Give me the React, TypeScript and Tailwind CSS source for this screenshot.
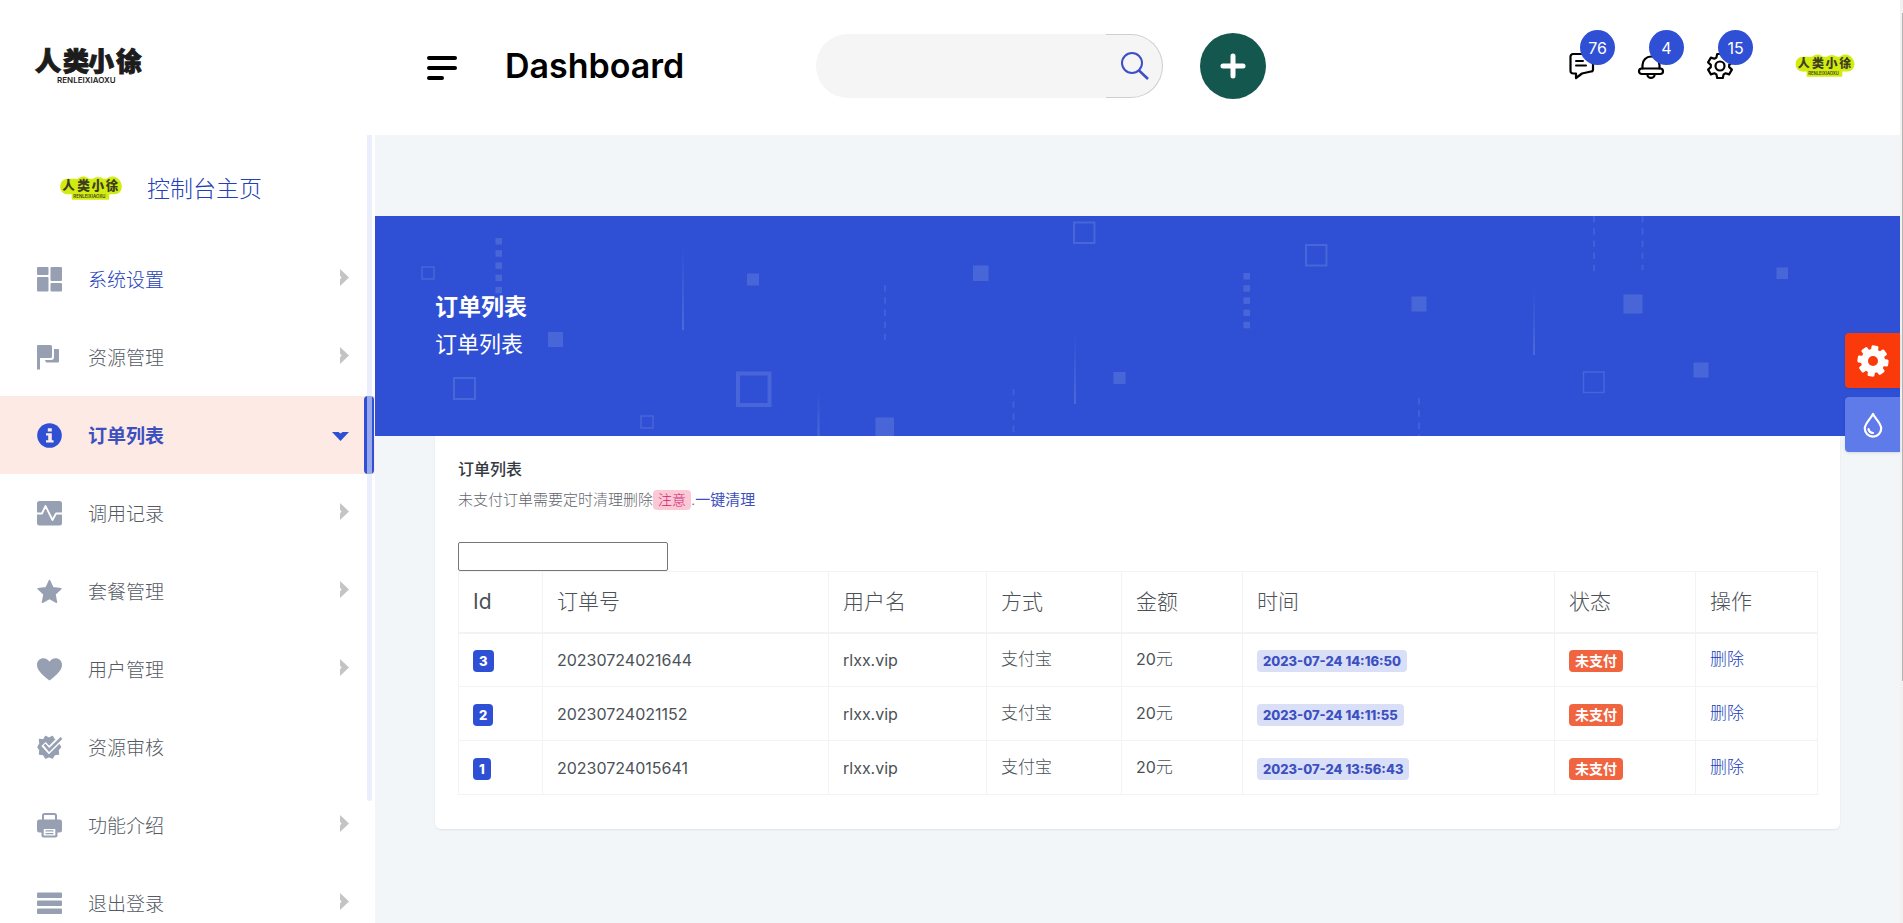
import type { ReactNode } from 'react';

const orders = [
  { id: 3, no: '20230724021644', user: 'rlxx.vip', time: '2023-07-24 14:16:50' },
  { id: 2, no: '20230724021152', user: 'rlxx.vip', time: '2023-07-24 14:11:55' },
  { id: 1, no: '20230724015641', user: 'rlxx.vip', time: '2023-07-24 13:56:43' },
];

const columns = [
  { label: 'Id', width: 'w-[84px]' },
  { label: '订单号', width: 'w-[286px]' },
  { label: '用户名', width: 'w-[158px]' },
  { label: '方式', width: 'w-[135px]' },
  { label: '金额', width: 'w-[121px]' },
  { label: '时间', width: 'w-[312px]' },
  { label: '状态', width: 'w-[141px]' },
  { label: '操作', width: 'w-[122px]' },
];

type NavItem = {
  label: string;
  icon: ReactNode;
  active?: boolean;
  highlight?: boolean;
  leaf?: boolean;
};

const navItems: NavItem[] = [
  {
    label: '系统设置',
    highlight: true,
    icon: (
      <>
        <rect x="0" y="0" width="11.5" height="8" rx="1" />
        <rect x="13.5" y="0" width="11.5" height="14" rx="1" />
        <rect x="0" y="10" width="11.5" height="14.5" rx="1" />
        <rect x="13.5" y="16" width="11.5" height="8.5" rx="1" />
      </>
    ),
  },
  {
    label: '资源管理',
    icon: (
      <>
        <path d="M1 0h12.5a1.5 1.5 0 0 1 1.5 1.5v10a1.5 1.5 0 0 1-1.5 1.5H3v11.5H0V1a1 1 0 0 1 1-1z" />
        <path d="M17 4h4a1 1 0 0 1 1 1v11.500a1 1 0 0 1-1 1H9.500q-1-.5-1.500-2.500H14a3 3 0 0 0 3-3z" />
      </>
    ),
  },
  {
    label: '订单列表',
    active: true,
    icon: (
      <>
        <circle cx="12.500" cy="12.500" r="12.300" />
        <path
          d="M10.800 5.300h4v3.200h-4zM9 10.300h5.800v7h1.800v2.200H9v-2.200h2.200v-4.800H9z"
          fill="#fdeae4"
        />
      </>
    ),
  },
  {
    label: '调用记录',
    icon: (
      <>
        <rect x="0" y="0" width="25" height="24.500" rx="2.500" />
        <path
          d="M0 12.500h5L8.500 5l7 14 3.500-6.500H25"
          fill="none"
          stroke="#fff"
          strokeWidth="1.800"
          strokeLinejoin="round"
        />
      </>
    ),
  },
  {
    label: '套餐管理',
    icon: (
      <path
        d="M12.500 1.500l3.400 7.300 8 1-5.900 5.500 1.500 8-7-3.900-7 3.900 1.500-8L1.100 9.800l8-1z"
        stroke="currentColor"
        strokeWidth="1.500"
        strokeLinejoin="round"
      />
    ),
  },
  {
    label: '用户管理',
    icon: (
      <path d="M12.500 23.500C4 17 0 13 0 7.800 0 3.800 3 1.300 6.400 1.300c2.600 0 4.700 1.200 6.100 3.400 1.400-2.200 3.500-3.400 6.100-3.400C22 1.300 25 3.800 25 7.800c0 5.200-4 9.200-12.500 15.700z" />
    ),
  },
  {
    label: '资源审核',
    leaf: true,
    icon: (
      <>
        <path
          d="M8.500 1.500l3.500 2 3.500-2 2 3.500 4-.5-.5 4 2.500 3.500-2.500 3 .5 4-4 .5-2 3.500-3.500-1.500-3.500 1.500-2-3.500-4-.5.500-4L1 12l2-3.500-.5-4 4 .5z"
          stroke="currentColor"
          strokeWidth="1.500"
          strokeLinejoin="round"
        />
        <path d="M6.500 9l5.500 6L25 2" fill="none" stroke="#fff" strokeWidth="6" />
        <path d="M7.500 9.500l4.700 5.500L24.500 3" fill="none" stroke="currentColor" strokeWidth="2.600" />
      </>
    ),
  },
  {
    label: '功能介绍',
    icon: (
      <>
        <path d="M6 7V2.500A1.500 1.500 0 0 1 7.500 1h10A1.500 1.500 0 0 1 19 2.500V7" fill="none" stroke="currentColor" strokeWidth="2" />
        <rect x="0" y="6.500" width="25" height="13" rx="2.500" />
        <path d="M4.500 15h16v7.500a2 2 0 0 1-2 2h-12a2 2 0 0 1-2-2z" />
        <path d="M6.700 16h11.600v6.500H6.700z" fill="#fff" />
        <path d="M8.500 17.800h8M8.500 20.700h8" stroke="currentColor" strokeWidth="1.300" />
      </>
    ),
  },
  {
    label: '退出登录',
    icon: (
      <>
        <rect x="0" y="1.500" width="25" height="5.500" rx="1" />
        <rect x="0" y="9.500" width="25" height="5.500" rx="1" />
        <rect x="0" y="17.500" width="25" height="5.500" rx="1" />
      </>
    ),
  },
];

// Banner artwork, drawn from the banner's top left corner
const filledSquares = [
  [372, 57.5, 12], [173, 116, 15], [500.5, 201.5, 18.5], [598, 49.5, 15.5],
  [1036.5, 80.5, 15], [738.5, 156, 12], [1401.5, 51.5, 11.5], [1248.5, 78.5, 19],
  [1318.5, 146.5, 15],
];
const outlinedSquares = [
  [47, 51, 12, 1.5], [79, 162, 21, 2], [266, 200, 12, 1.5], [363, 157.5, 31.5, 4],
  [699, 6.5, 20.5, 2], [931, 29, 20.5, 2], [1208.5, 156, 20.5, 1.5],
];
const dotColumns = [
  [120.5, 22], [868.5, 57],
];
const dashedLines = [
  [510, 69, 127], [638.5, 173, 217], [1044, 182, 220], [1219, 0, 56], [1267.5, 0, 54],
];
const fadingLines = [
  [308, 31, 114], [443.5, 174, 220], [700, 116, 188], [1159, 72, 139],
];

function BannerArt() {
  return (
    <svg className="absolute inset-0 w-full h-full" aria-hidden="true">
      <defs>
        <linearGradient id="fade" x1="0" y1="0" x2="0" y2="1">
          <stop offset="0" stopColor="#fff" stopOpacity="0" />
          <stop offset="1" stopColor="#fff" stopOpacity="0.14" />
        </linearGradient>
      </defs>
      <g fill="#fff" fillOpacity="0.13">
        {filledSquares.map(([x, y, s]) => (
          <rect key={x} x={x} y={y} width={s} height={s} />
        ))}
        {dotColumns.map(([x, y]) =>
          [0, 1, 2, 3, 4].map((i) => (
            <rect key={`${x}-${i}`} x={x} y={y + i * 12.2} width={6.5} height={6.5} />
          ))
        )}
      </g>
      <g fill="none" stroke="#fff" strokeOpacity="0.12">
        {outlinedSquares.map(([x, y, s, w]) => (
          <rect key={x} x={x} y={y} width={s} height={s} strokeWidth={w} />
        ))}
      </g>
      <g fill="none" stroke="#fff" strokeOpacity="0.09">
        {dashedLines.map(([x, y1, y2]) => (
          <path key={x} d={`M${x} ${y1}V${y2}`} strokeWidth={2} strokeDasharray="6.500 5.700" />
        ))}
      </g>
      {fadingLines.map(([x, y1, y2]) => (
        <rect key={x} x={x - 1} y={y1} width={2} height={y2 - y1} fill="url(#fade)" />
      ))}
    </svg>
  );
}

function Logo({ className }: { className: string }) {
  return (
    <svg viewBox="0 0 110 38" className={`overflow-visible ${className}`} role="img" aria-label="人类小徐">
      <g fill="#1c1c1c">
        <text
          x="0 28 53 81"
          y="24"
          fontSize="26"
          fontWeight="900"
          fontFamily='"Noto Sans CJK SC", sans-serif'
          stroke="#1c1c1c"
          strokeWidth="1"
        >
          人类小徐
        </text>
        <text x="22" y="36" fontSize="8" fontWeight="600" fontFamily="Inter, sans-serif">
          RENLEIXIAOXU
        </text>
      </g>
    </svg>
  );
}

function LogoBadge({ className }: { className: string }) {
  return (
    <svg viewBox="-6 -6 122 49" className={`overflow-visible ${className}`} role="img" aria-label="人类小徐">
      <g fill="#d2ec12" stroke="#d2ec12" strokeLinejoin="round">
        <rect x="4" y="6" width="102" height="18" rx="8" strokeWidth="10" />
        <circle cx="41" cy="11" r="14" />
        <circle cx="68" cy="12" r="14" />
        <circle cx="94" cy="12" r="15" />
        <circle cx="15" cy="15" r="13" />
        <rect x="22" y="28" width="64" height="9" strokeWidth="4" />
      </g>
      <g fill="#3d3f1f">
        <text
          x="3 30 56 82"
          y="22"
          fontSize="23"
          fontWeight="900"
          fontFamily='"Noto Sans CJK SC", sans-serif'
        >
          人类小徐
        </text>
        <text x="23" y="36" fontSize="8" fontWeight="600" fontFamily="Inter, sans-serif">
          RENLEIXIAOXU
        </text>
      </g>
    </svg>
  );
}

function CountButton({ label, count, children }: { label: string; count: number; children: ReactNode }) {
  return (
    <button type="button" aria-label={label} className="relative w-7 h-7">
      <svg
        viewBox="0 0 28 28"
        className="w-7 h-7"
        fill="none"
        stroke="#000"
        strokeWidth="2.200"
        strokeLinejoin="round"
        strokeLinecap="round"
      >
        {children}
      </svg>
      <span className="absolute -top-[22px] left-3 w-[35px] h-[35px] rounded-full bg-[#2f50d4] text-white text-base flex items-center justify-center">
        {count}
      </span>
    </button>
  );
}

function Header() {
  return (
    <header className="flex items-center h-[135px] shrink-0 bg-white pb-[3px]">
      <div className="w-[375px] shrink-0 pl-[35px]">
        <a href="#" className="block w-[110px]">
          <Logo className="w-[110px] h-[38px]" />
        </a>
      </div>
      <div className="flex flex-1 items-center pl-[52px] pr-[43px]">
        <button type="button" aria-label="菜单" className="flex flex-col gap-[6px] w-[30px] pt-1">
          <span className="h-1 w-full rounded-full bg-black" />
          <span className="h-1 w-full rounded-full bg-black" />
          <span className="h-1 w-[17px] rounded-full bg-black" />
        </button>
        <h1 className="ml-12 w-[311px] text-[34px] leading-10 font-semibold text-black">Dashboard</h1>
        <div className="flex w-[347px] h-16">
          <input
            type="text"
            aria-label="搜索"
            className="w-[290px] min-w-0 rounded-l-full bg-[#f5f5f5] px-6 outline-none"
          />
          <button
            type="button"
            aria-label="搜索按钮"
            className="flex-1 flex items-center rounded-r-full border border-l-0 border-[#cfcfcf] bg-[#f5f5f5] pl-[14px]"
          >
            <svg viewBox="0 0 30 30" className="w-[30px] h-[30px]" fill="none" stroke="#3c4fc4" strokeWidth="2">
              <circle cx="12" cy="12" r="10" />
              <path d="M19 19.500l9 8.500" strokeWidth="2.500" />
            </svg>
          </button>
        </div>
        <button
          type="button"
          aria-label="新增"
          className="ml-[37px] w-[66px] h-[66px] rounded-full bg-[#13574e] flex items-center justify-center"
        >
          <svg viewBox="0 0 26 26" className="w-[26px] h-[26px]" stroke="#fff" strokeWidth="5" strokeLinecap="round">
            <path d="M13 3v20M3 13h20" />
          </svg>
        </button>
        <div className="ml-auto flex items-center gap-[41px]">
          <CountButton label="消息" count={76}>
            <path d="M5 2h18a2 2 0 0 1 2 2v13.500a2 2 0 0 1-2 2l-9 2L8 26v-4.500H5a2.500 2.500 0 0 1-2.500-2.500V4.500A2.500 2.500 0 0 1 5 2z" />
            <path d="M8 9h7M8 13.500h10" strokeWidth="2" />
          </CountButton>
          <CountButton label="通知" count={4}>
            <path d="M5.500 16.500V13a8.500 8.500 0 0 1 17 0v3.500" />
            <rect x="2" y="16.500" width="24" height="5.500" rx="2.700" />
            <path d="M10.500 23.500a3.600 3 0 0 0 7 0" />
          </CountButton>
          <CountButton label="设置" count={15}>
            <circle cx="14" cy="14" r="4.500" />
            <path d="M11.200 2h5.600l.8 3.600 2 1.100 3.500-1.100 2.800 4.800-2.700 2.500v2.200l2.700 2.500-2.800 4.800-3.500-1.100-2 1.100-.8 3.600h-5.600l-.8-3.600-2-1.100-3.500 1.100-2.800-4.800 2.700-2.500v-2.200L2.100 10.400l2.800-4.800 3.500 1.100 2-1.100z" />
          </CountButton>
          <a href="#" className="block ml-[18px]">
            <LogoBadge className="w-16 h-[26px]" />
          </a>
        </div>
      </div>
    </header>
  );
}

function NavLink({ item }: { item: NavItem }) {
  const iconColor = item.active ? 'text-[#2f50d4]' : 'text-[#96a0b2]';
  let textColor = 'text-[#555b65] font-light';
  if (item.highlight) textColor = 'text-[#2340b8] font-light';
  if (item.active) textColor = 'text-[#3c50c0] font-bold';

  return (
    <li className={`relative ${item.active ? 'bg-[#fdeae4]' : ''}`}>
      <a href="#" className="flex items-center h-[78px] pl-[37px] pr-[26px]">
        <svg viewBox="0 0 25 25" className={`w-[25px] h-[25px] shrink-0 ${iconColor}`} fill="currentColor">
          {item.icon}
        </svg>
        <span className={`ml-[26px] pt-[3px] text-[19px] leading-7 ${textColor}`}>{item.label}</span>
        {!item.leaf && !item.active && (
          <svg viewBox="0 0 9 17" className="ml-auto mb-[3px] w-[9px] h-[17px] text-[#c4c4c4]" fill="currentColor">
            <path d="M0 0l9 8.500L0 17V10.500L1.500 8.500 0 6.500z" />
          </svg>
        )}
        {item.active && (
          <svg viewBox="0 0 17 9" className="ml-auto mt-[3px] w-[17px] h-[9px] text-[#2f50d4]" fill="currentColor">
            <path d="M0 0h6.500l2 1.500 2-1.500H17L8.500 9z" />
          </svg>
        )}
      </a>
      {item.active && <span className="absolute top-0 right-px w-[10px] h-full rounded-sm bg-[#2f50d4]" />}
    </li>
  );
}

function Sidebar() {
  return (
    <aside className="relative w-[375px] shrink-0 bg-white">
      <a href="#" className="flex items-center h-[105px] pl-[57px] pt-[2px]">
        <LogoBadge className="w-[68px] h-[27px]" />
        <span className="ml-[22px] text-[23px] leading-8 font-light text-[#2340b8]">控制台主页</span>
      </a>
      <nav>
        <ul>
          {navItems.map((item) => (
            <NavLink key={item.label} item={item} />
          ))}
        </ul>
      </nav>
      {/* Scroll thumb lies over the active marker */}
      <span className="absolute top-0 right-[3px] w-[5px] h-[666px] rounded-b bg-[#dde4f8]/60" />
    </aside>
  );
}

function OrderTable() {
  return (
    <table className="w-full table-fixed border-collapse border border-[#f3f3f3] text-[#4b5156]">
      <thead>
        <tr className="h-[61px] border-b-2 border-[#f3f3f3]">
          {columns.map((col) => (
            <th
              key={col.label}
              scope="col"
              className={`${col.width} border-r border-[#f3f3f3] px-[14px] text-left text-[21px] ${
                col.label === 'Id' ? 'font-normal' : 'font-light'
              }`}
            >
              {col.label}
            </th>
          ))}
        </tr>
      </thead>
      <tbody>
        {orders.map((order) => (
          <tr key={order.id} className="h-[54px] border-b border-[#f3f3f3] text-base *:border-r *:border-[#f3f3f3] *:px-[14px]">
            <td>
              <span className="inline-block rounded bg-[#2f50d4] px-[6px] text-[13px] leading-[22px] font-extrabold text-white">
                {order.id}
              </span>
            </td>
            <td>{order.no}</td>
            <td>{order.user}</td>
            <td className="text-[17px] font-light">支付宝</td>
            <td>
              20<span className="text-[17px] font-light">元</span>
            </td>
            <td>
              <span className="inline-block rounded bg-[#d9dff7] px-[6px] text-[13px] leading-[22px] font-extrabold text-[#3c50c0]">
                {order.time}
              </span>
            </td>
            <td>
              <span className="inline-block rounded bg-[#f0643f] px-[6px] text-[14px] leading-[22px] font-bold text-white">
                未支付
              </span>
            </td>
            <td>
              <a href="#" className="text-[17px] font-light text-[#2340b8]">删除</a>
            </td>
          </tr>
        ))}
      </tbody>
    </table>
  );
}

function SideTools() {
  return (
    <div className="absolute top-[198px] right-0 flex flex-col gap-[9px]">
      <button type="button" aria-label="主题设置" className="w-[55px] h-[55px] rounded-l bg-[#fb3a0b] flex items-center justify-center shadow">
        <svg viewBox="0 0 32 32" className="w-8 h-8" fill="#fff">
          <g transform="rotate(8 16 16)">
            {[0, 45, 90, 135].map((angle) => (
              <rect key={angle} x="12.500" y="0.500" width="7" height="31" rx="1.500" transform={`rotate(${angle} 16 16)`} />
            ))}
          </g>
          <circle cx="16" cy="16" r="12" />
          <circle cx="16" cy="16" r="5" fill="#fb3a0b" />
        </svg>
      </button>
      <button type="button" aria-label="配色" className="w-[55px] h-[55px] rounded-l bg-[#5f7ae9] flex items-center justify-center shadow">
        <svg viewBox="0 0 20 26" className="w-5 h-[26px]" fill="none" stroke="#fff" strokeWidth="2.200" strokeLinejoin="round">
          <path d="M10 2C7.500 7 1.800 11.500 1.800 16.500a8.200 8.200 0 0 0 16.400 0C18.200 11.500 12.500 7 10 2z" />
          <path d="M5.500 17a5 5 0 0 0 4.500 4" strokeLinecap="round" />
        </svg>
      </button>
    </div>
  );
}

export default function App() {
  return (
    <div className="flex h-screen overflow-hidden bg-[#f3f6f8] font-[Inter,'Noto_Sans_CJK_SC',sans-serif]">
      <div className="flex flex-1 min-w-0 flex-col">
        <Header />
        <div className="flex flex-1 min-h-0">
          <Sidebar />
          <main className="relative flex-1 min-w-0 pt-[81px]">
            <section className="relative h-[220px] bg-[#2f50d4] px-[60px] flex flex-col justify-center text-white">
              <BannerArt />
              <h2 className="relative text-[23px] leading-[37px] font-bold">订单列表</h2>
              <p className="relative text-[22px] leading-[37px]">订单列表</p>
            </section>
            <section className="mx-[60px] rounded-b-md bg-white px-[23px] pt-[19px] pb-[34px] shadow-[0_1px_2px_rgba(0,0,0,0.08)]">
              <h3 className="text-base leading-7 font-medium text-[#343a40]">订单列表</h3>
              <p className="mt-1 mb-[29px] text-[15px] leading-[26px] font-light text-[#5f656d]">
                未支付订单需要定时清理删除
                <code className="rounded bg-[#fbc9d6] px-[5px] text-[14px] leading-5 inline-block font-[Inter,'Noto_Sans_CJK_SC',sans-serif] text-[#d01c70]">
                  注意
                </code>
                .<a href="#" className="font-normal text-[#3c50c0]">一键清理</a>
              </p>
              <input
                type="text"
                aria-label="搜索订单"
                className="block w-[210px] h-[29px] rounded-xs border border-[#767676] px-1 text-base"
              />
              <OrderTable />
            </section>
            <SideTools />
          </main>
        </div>
      </div>
      <div className="w-[3px] shrink-0 bg-[#f1f1f1] pt-[13px] pl-[2px]">
        <div className="h-[668px] bg-[#b5b5b5]" />
      </div>
    </div>
  );
}
